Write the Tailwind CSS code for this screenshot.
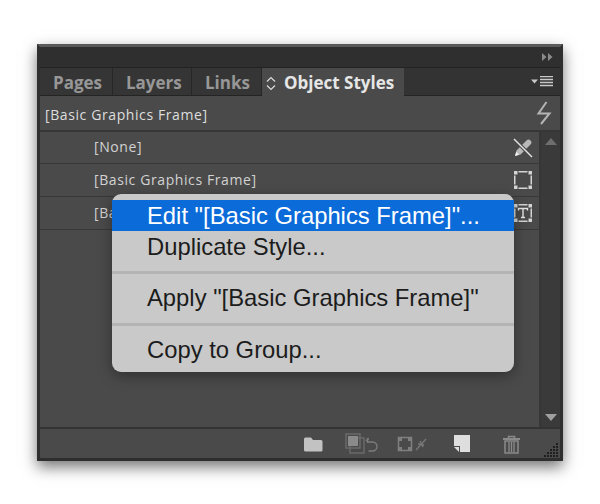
<!DOCTYPE html>
<html lang="en">
<head>
<meta charset="UTF-8">
<title>Object Styles</title>
<script src="https://cdn.jsdelivr.net/npm/@tailwindcss/browser@4"></script>
</head>
<body class="w-[600px] h-[504px] bg-white overflow-hidden font-['Liberation_Sans',sans-serif]">
<div class="pt-[44px] pl-[37px]">
  <div class="relative w-[526px] h-[417px] bg-[#3a3a3a] border-[3px] border-[#2e2e2e] border-t-[#5a5a5a] flex flex-col shadow-[0_6px_14px_rgba(0,0,0,0.55)]">
    <!-- title bar -->
    <div class="h-[21px] bg-[#2f2f2f] border-b border-[#222] flex items-center justify-end pr-[7px] shrink-0">
      <svg width="11" height="8" viewBox="0 0 11 8"><path d="M0 0l4.500 4-4.500 4zM6 0l4.500 4-4.500 4z" fill="#8a8a8a"/></svg>
    </div>
    <!-- tabs -->
    <div class="h-[28px] bg-[#333] border-b border-[#242424] flex items-stretch shrink-0 relative z-0">
      <div class="w-[73px] border-r border-[#272727] flex items-center pl-[13px] pt-[2px] text-[17px] font-bold text-[#979797] font-['Open_Sans',sans-serif] bg-[#353535]">Pages</div>
      <div class="w-[79px] border-r border-[#272727] flex items-center pl-[13px] pt-[2px] text-[17px] font-bold text-[#979797] font-['Open_Sans',sans-serif] bg-[#353535]">Layers</div>
      <div class="w-[70px] border-r border-[#272727] flex items-center pl-[13px] pt-[2px] text-[17px] font-bold text-[#979797] font-['Open_Sans',sans-serif] bg-[#353535]">Links</div>
      <div class="w-[142px] -mb-px bg-[#4a4a4a] flex items-center pl-[4px] pt-[2px] gap-[8px] text-[17px] font-bold text-[#e6e6e6] font-['Open_Sans',sans-serif]">
        <svg width="10" height="15" viewBox="0 0 10 15" fill="none" stroke="#dcdcdc" stroke-width="1.200"><path d="M1 5.500l4-4 4 4M1 9.500l4 4 4-4"/></svg>
        <span>Object Styles</span>
      </div>
      <div class="flex-1 flex items-center justify-end pr-[6px]">
        <svg width="23" height="12" viewBox="0 0 23 12"><path d="M0 3.500h7l-3.500 4z" fill="#c8c8c8"/><path d="M9 .5h13M9 3.500h13M9 6.500h13M9 9.500h13" stroke="#c8c8c8" stroke-width="1.300"/></svg>
      </div>
    </div>
    <!-- current style -->
    <div class="h-[36px] bg-[#4a4a4a] border-b-[2px] border-[#363636] flex items-center justify-between pl-[5px] pr-[8px] shrink-0">
      <span class="text-[14px] pt-[2px] text-[#dedede] font-['Open_Sans',sans-serif] tracking-[0.6px]">[Basic Graphics Frame]</span>
      <svg width="16" height="24" viewBox="0 0 16 24" fill="none" stroke="#b4b4b4" stroke-width="2"><path d="M10.500 1L2.500 12.500H13.500L5 23"/></svg>
    </div>
    <!-- list + scrollbar -->
    <div class="flex-1 flex bg-[#4a4a4a] min-h-0">
      <div class="flex-1 min-w-0 border-r-[2px] border-[#363636]">
        <div class="h-[32px] border-b border-[#383838] flex items-center justify-between pl-[54px] pr-[6px]">
          <span class="text-[14px] -mt-[2px] text-[#d2d2d2] font-['Open_Sans',sans-serif] tracking-[0.6px]">[None]</span>
          <svg width="20" height="20" viewBox="0 0 20 20" fill="none"><path d="M2 18l1.500-5.500L13.500 2.500a2.500 2.500 0 0 1 4 4L7.500 16.500z" fill="#b8b8b8"/><path d="M2 18l1.200-4.300 3 3z" fill="#efefef"/><path d="M1 1l18 18" stroke="#4a4a4a" stroke-width="3.500"/><path d="M1 1l18 18" stroke="#e4e4e4" stroke-width="1.400"/></svg>
        </div>
        <div class="h-[33px] border-b border-[#383838] flex items-center justify-between pl-[54px] pr-[6px]">
          <span class="text-[14px] -mt-[2px] text-[#d2d2d2] font-['Open_Sans',sans-serif] tracking-[0.6px]">[Basic Graphics Frame]</span>
          <svg width="20" height="20" viewBox="0 0 20 20" fill="none" stroke="#d4d4d4" stroke-width="1.500"><path d="M5.500 1.750h9M5.500 18.250h9M1.750 5.500v9M18.250 5.500v9"/><path d="M1 1h3.500v3.500H1zM15.500 1H19v3.500h-3.500zM1 15.500h3.500V19H1zM15.500 15.500H19V19h-3.500z" fill="#d4d4d4" stroke="none"/></svg>
        </div>
        <div class="h-[33px] border-b border-[#383838] flex items-center justify-between pl-[54px] pr-[6px]">
          <span class="text-[14px] -mt-[2px] text-[#d2d2d2] font-['Open_Sans',sans-serif] tracking-[0.6px]">[Ba</span>
          <svg width="20" height="20" viewBox="0 0 20 20" fill="none" stroke="#d4d4d4" stroke-width="1.500"><path d="M5.500 1.750h9M5.500 18.250h9M1.750 5.500v9M18.250 5.500v9"/><path d="M1 1h3.500v3.500H1zM15.500 1H19v3.500h-3.500zM1 15.500h3.500V19H1zM15.500 15.500H19V19h-3.500z" fill="#d4d4d4" stroke="none"/><path d="M5.500 7.500V5.500h9v2M10 5.500v9M8 14.500h4" stroke="#e4e4e4" stroke-width="1.400"/></svg>
        </div>
      </div>
      <div class="w-[19px] bg-[#3a3a3a] flex flex-col justify-between items-center py-[6px] shrink-0">
        <svg width="12" height="7" viewBox="0 0 12 7"><path d="M6 0l6 7H0z" fill="#6e6e6e"/></svg>
        <svg width="12" height="7" viewBox="0 0 12 7"><path d="M0 0h12L6 7z" fill="#a0a0a0"/></svg>
      </div>
    </div>
    <!-- footer -->
    <div class="h-[31px] bg-[#4a4a4a] border-t-[2px] border-[#333] flex items-center shrink-0 pl-[263px] relative">
      <svg class="mr-[22px]" width="20" height="16" viewBox="0 0 20 16"><path d="M1 3a1.500 1.500 0 0 1 1.500-1.500H8L10 4h8a1.500 1.500 0 0 1 1.500 1.500V14a1.500 1.500 0 0 1-1.500 1.500H2.500A1.500 1.500 0 0 1 1 14z" fill="#c2c2c2"/></svg>
      <svg class="mr-[18px]" width="34" height="22" viewBox="0 0 34 22" fill="none"><rect x="1" y="1" width="14" height="14" stroke="#6a6a6a" stroke-width="1.500"/><rect x="5" y="5" width="14" height="15" stroke="#6a6a6a" stroke-width="1.500"/><rect x="3" y="3" width="10" height="10" fill="#8a8a8a"/><path d="M24 6h-1.500v4M21 8l2.500-3 M22.500 9h5a4 4 0 0 1 0 9h-4" stroke="#7c7c7c" stroke-width="1.400"/></svg>
      <svg class="mr-[26px]" width="30" height="16" viewBox="0 0 30 16" fill="none"><rect x="1.500" y="1.500" width="13" height="13" stroke="#7f7f7f" stroke-width="1.500"/><path d="M2 2h3v3H2zM11 2h3v3h-3zM2 11h3v3H2zM11 11h3v3h-3z" fill="#7f7f7f"/><path d="M19 14L29 3M23 5l3 6M21 8l6 1" stroke="#777" stroke-width="1.400"/></svg>
      <svg class="mr-[31px]" width="18" height="19" viewBox="0 0 18 19"><path d="M1 1h16v17H7V12H1z" fill="#dedede"/><path d="M1 13h5v5z" fill="#dedede"/></svg>
      <svg width="19" height="20" viewBox="0 0 19 20" fill="none" stroke="#8a8a8a"><path d="M1 5h17" stroke-width="2"/><path d="M6.500 4V2.500h6V4" stroke-width="1.500"/><path d="M3 7h13v12H3z" stroke-width="1.500"/><path d="M7 8v10M9.500 8v10M12 8v10" stroke-width="1.300"/></svg>
      <svg class="absolute right-[1px] bottom-[1px]" width="15" height="15" viewBox="0 0 15 15" fill="#1f1f1f"><path d="M12 1h2v2h-2zM9 4h2v2H9zM12 4h2v2h-2zM6 7h2v2H6zM9 7h2v2H9zM12 7h2v2h-2zM3 10h2v2H3zM6 10h2v2H6zM9 10h2v2H9zM12 10h2v2h-2zM0 13h2v2H0zM3 13h2v2H3zM6 13h2v2H6zM9 13h2v2H9zM12 13h2v2h-2z"/></svg>
    </div>
    <!-- context menu -->
    <div class="absolute left-[72px] top-[147px] w-[402px] h-[178px] rounded-[9px] bg-[#c9c9c9] pt-[6px] text-[23.800px] leading-[31px] text-[#1c1c1c] shadow-[0_4px_14px_rgba(0,0,0,0.35)]">
      <div class="h-[31px] pl-[35px] bg-[#0b6bd8] text-white">Edit "[Basic Graphics Frame]"...</div>
      <div class="h-[31px] pl-[35px]">Duplicate Style...</div>
      <div class="h-[3px] my-[9px] bg-[#b4b4b4]"></div>
      <div class="h-[31px] pl-[35px] leading-[29px]">Apply "[Basic Graphics Frame]"</div>
      <div class="h-[3px] my-[9px] bg-[#b4b4b4]"></div>
      <div class="h-[31px] pl-[35px] leading-[29px]">Copy to Group...</div>
    </div>
  </div>
</div>
</body>
</html>
